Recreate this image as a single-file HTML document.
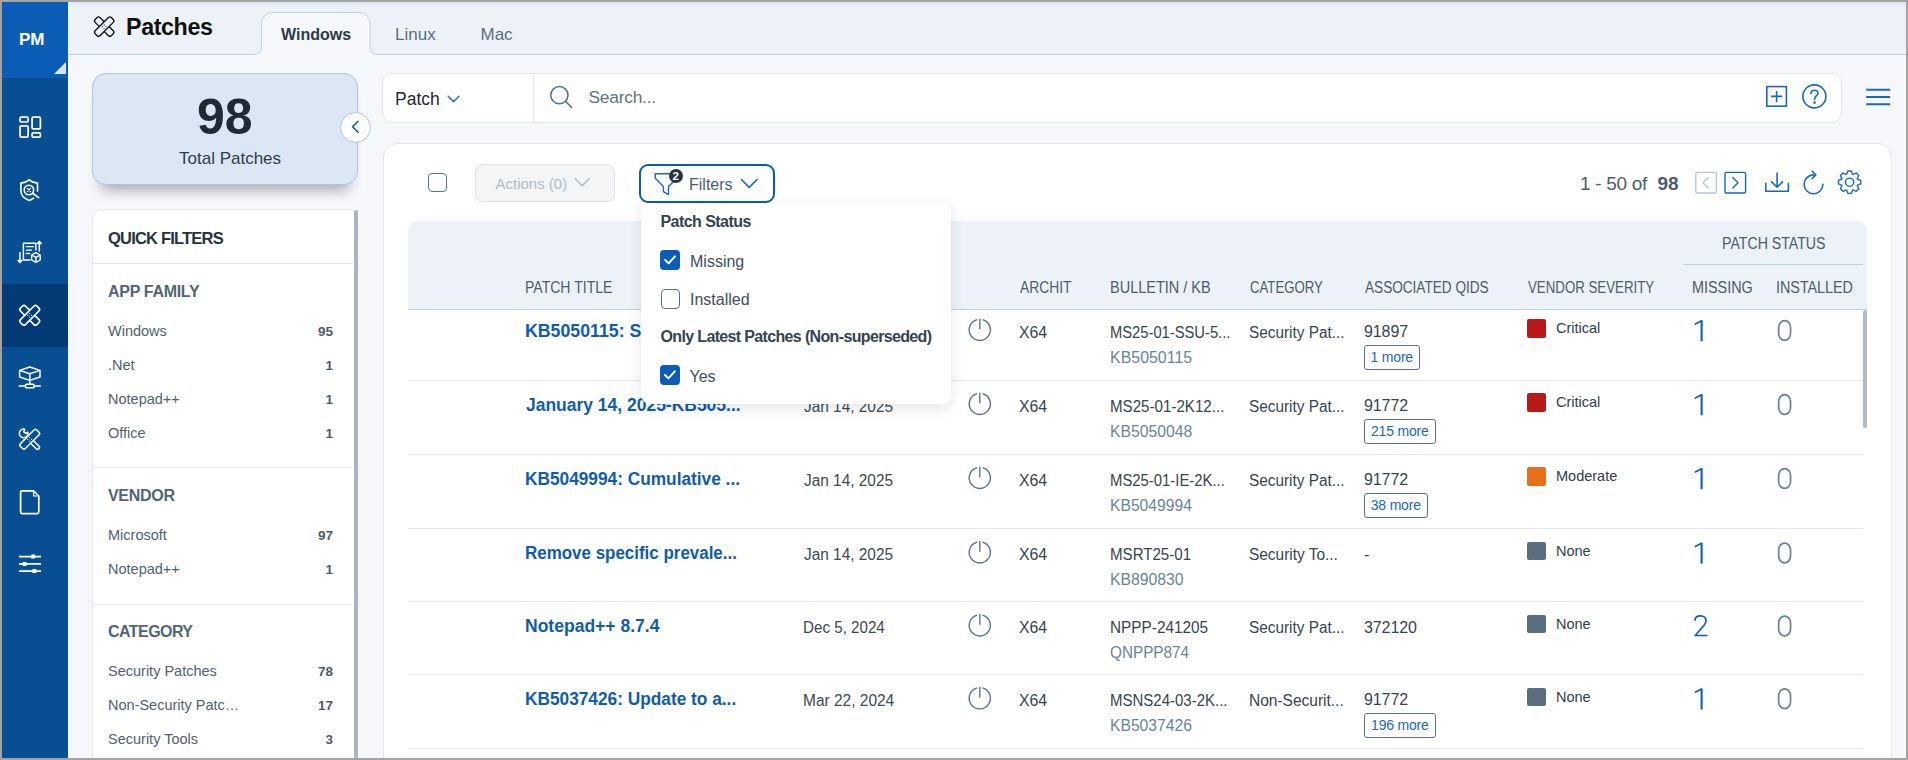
<!DOCTYPE html>
<html><head><meta charset="utf-8">
<style>
*{box-sizing:border-box;margin:0;padding:0}
html,body{width:1908px;height:760px;overflow:hidden}
body{font-family:"Liberation Sans",sans-serif;background:#a3a3a3;position:relative;color:#2b3a47}
.a{position:absolute}
.t{position:absolute;white-space:nowrap;line-height:1}
#app{position:absolute;left:2px;top:2px;width:1904px;height:756px;background:#f5f7fa;overflow:hidden}
#side{position:absolute;left:2px;top:2px;width:66px;height:756px;background:#074e93}
#pm{position:absolute;left:2px;top:2px;width:66px;height:76px;background:#0b5cb5}
#hdr{position:absolute;left:68px;top:2px;width:1838px;height:53px;background:linear-gradient(#dce8f5 0,#e1eaf5 2px,#edf2f9 6px);border-bottom:1px solid #bcd2ea}
svg{position:absolute;overflow:visible}
</style></head>
<body>
<div id="app"></div>
<!-- SIDEBAR -->
<div id="side"></div>
<div id="pm"></div>
<div class="t" style="left:19px;top:31px;font-size:17px;font-weight:bold;color:#fff">PM</div>
<div class="a" style="left:54px;top:62px;width:0;height:0;border-left:12px solid transparent;border-bottom:12px solid #d9e4f3"></div>
<div class="a" style="left:2px;top:284px;width:66px;height:63px;background:#053b75"></div>


<!-- dashboard -->
<svg style="left:0;top:0" width="1908" height="760" fill="none" stroke="#fff" stroke-width="1.7">
 <rect x="20.1" y="117.1" width="8" height="4.9" rx="1.2"/>
 <rect x="20.1" y="125.9" width="8" height="11.3" rx="1.2"/>
 <rect x="32.1" y="117.1" width="8.3" height="11.8" rx="1.2"/>
 <rect x="32.1" y="132.8" width="8.3" height="4.4" rx="1.2"/>
</svg>
<!-- shield -->
<svg style="left:0;top:0" width="1908" height="760" fill="none" stroke="#fff" stroke-width="1.6" stroke-linecap="round" stroke-linejoin="round">
 <path d="M29.2 179.8 C27 181.7 24 182.9 20.9 183.1 V190.6 C20.9 195.2 24.3 198.8 29.2 200.4 C30.9 199.9 32.3 199.1 33.5 198.1"/>
 <path d="M29.2 179.8 C31.4 181.7 34.4 182.9 37.5 183.1 V191.2"/>
 <circle cx="28.9" cy="190" r="4.7"/>
 <path d="M27.3 188.4 L30.5 191.6 M30.5 188.4 L27.3 191.6" stroke-width="1.2"/>
 <path d="M32.6 193.3 L38.6 197.6" stroke-width="1.7"/>
</svg>
<!-- report -->
<svg style="left:0;top:0" width="1908" height="760" fill="none" stroke="#fff" stroke-width="1.5" stroke-linejoin="round">
 <path d="M30.4 260 H23.4 V243.3 H35.8 V250.6"/>
 <path d="M25.8 246.6 H33.8 M25.8 250.1 H32.1 M25.8 253.5 H30.2" stroke-width="1.4"/>
 <path d="M19.9 252 V260.6"/>
 <path d="M18 260.4 L19.9 262.6 L21.8 260.4 Z" fill="#fff"/>
 <path d="M39.3 243.4 V251.6"/>
 <path d="M37.4 243.6 L39.3 241.4 L41.2 243.6 Z" fill="#fff"/>
 <path d="M35.9 252.6 L40.2 255 V260 L35.9 262.4 L31.6 260 V255 Z M31.6 255 L35.9 257.4 L40.2 255 M35.9 257.4 V262.4" stroke-width="1.4"/>
</svg>
<!-- patch (active) -->
<svg style="left:0;top:0" width="1908" height="760" stroke="#fff" stroke-width="1.6">
 <g transform="translate(29.7 315.3)">
  <rect x="-11.6" y="-3.5" width="23.2" height="7" rx="2" transform="rotate(45)" fill="none"/>
  <rect x="-11.6" y="-3.5" width="23.2" height="7" rx="2" transform="rotate(-45)" fill="#053b75"/>
 </g>
</svg>
<svg style="left:0;top:0" width="1908" height="760" fill="#fff"><circle cx="27.8" cy="315.4" r=".6"/><circle cx="31.6" cy="315.4" r=".6"/><circle cx="29.7" cy="313.6" r=".6"/><circle cx="29.7" cy="317.2" r=".6"/></svg>
<!-- network box -->
<svg style="left:0;top:0" width="1908" height="760" fill="none" stroke="#fff" stroke-width="1.5" stroke-linejoin="round">
 <path d="M29.8 367 L40 370.4 V377 L29.8 380.4 L19.6 377 V370.4 Z M19.6 370.4 L29.8 373.8 L40 370.4 M29.8 373.8 V384.3"/>
 <path d="M18.6 386 H25.6 M34 386 H40.8"/>
 <rect x="25.6" y="384.3" width="8.4" height="3.4" rx=".8"/>
</svg>
<!-- tools -->
<svg style="left:0;top:0" width="1908" height="760" stroke="#fff" stroke-width="1.5" stroke-linejoin="round">
 <g transform="translate(23.6 433.4) rotate(45)">
  <rect x="3" y="-1.9" width="18.6" height="3.8" rx="1.9" fill="#074e93"/>
  <path d="M2.1 -3.8 A4.3 4.3 0 1 1 -2.1 -3.8 L-1 -1.2 H1 Z" fill="#074e93"/>
 </g>
 <g transform="translate(29.7 439.3)">
  <rect x="-11.6" y="-3.5" width="23.2" height="7" rx="2" transform="rotate(-45)" fill="#074e93"/>
 </g>
</svg>
<svg style="left:0;top:0" width="1908" height="760" fill="#fff"><circle cx="27.8" cy="439.4" r=".6"/><circle cx="31.6" cy="439.4" r=".6"/><circle cx="29.7" cy="437.6" r=".6"/><circle cx="29.7" cy="441.2" r=".6"/></svg>
<!-- document -->
<svg style="left:0;top:0" width="1908" height="760" fill="none" stroke="#fff" stroke-width="1.7" stroke-linejoin="round">
 <path d="M22.2 490.8 H33.6 L38.8 496 V512 C38.8 513 38 513.6 37.2 513.6 H22.2 C21.4 513.6 20.6 513 20.6 512 V492.4 C20.6 491.5 21.4 490.8 22.2 490.8 Z"/>
 <path d="M33.6 490.8 V496 H38.8" stroke-width="1.2"/>
</svg>
<!-- sliders -->
<svg style="left:0;top:0" width="1908" height="760" fill="none" stroke="#fff" stroke-width="1.6">
 <path d="M19 556.6 H41 M19 563.9 H41 M19 571.1 H41"/>
 <rect x="31.2" y="554.6" width="4" height="4" fill="#fff" stroke="none" rx=".5"/>
 <rect x="22.6" y="561.9" width="4" height="4" fill="#fff" stroke="none" rx=".5"/>
 <rect x="32.4" y="569.1" width="4" height="4" fill="#fff" stroke="none" rx=".5"/>
</svg>

<!-- HEADER -->
<div id="hdr"></div>
<!-- patches title icon -->
<svg style="left:0;top:0" width="1908" height="760" stroke="#111" stroke-width="1.35">
 <g transform="translate(104.2 26.6)">
  <rect x="-11.4" y="-3.4" width="22.8" height="6.8" rx="2" transform="rotate(45)" fill="none"/>
  <rect x="-11.4" y="-3.4" width="22.8" height="6.8" rx="2" transform="rotate(-45)" fill="#edf2f9"/>
 </g>
</svg>
<svg style="left:0;top:0" width="1908" height="760" fill="#333"><circle cx="102.4" cy="26.7" r=".6"/><circle cx="106" cy="26.7" r=".6"/><circle cx="104.2" cy="24.9" r=".6"/><circle cx="104.2" cy="28.5" r=".6"/></svg>
<div class="t" style="left:126px;top:16px;font-size:23.3px;letter-spacing:-0.4px;font-weight:bold;color:#111">Patches</div>
<!-- tabs -->
<svg style="left:0;top:0" width="1908" height="760"><path d="M253.5 54.5 Q261.5 54.5 261.5 46.5 V23.5 A11 11 0 0 1 272.5 12.5 H359 A11 11 0 0 1 370 23.5 V46.5 Q370 54.5 378 54.5 V56 H253.5 Z" fill="#f5f7fa"/><path d="M253.5 54.5 Q261.5 54.5 261.5 46.5 V23.5 A11 11 0 0 1 272.5 12.5 H359 A11 11 0 0 1 370 23.5 V46.5 Q370 54.5 378 54.5" fill="none" stroke="#bcd2ea" stroke-width="1"/></svg>
<div class="t" style="left:281px;top:27px;font-size:16px;font-weight:bold;color:#2b3a47">Windows</div>
<div class="t" style="left:395px;top:26px;font-size:17px;color:#5b6e7d">Linux</div>
<div class="t" style="left:480.5px;top:26px;font-size:17px;color:#5b6e7d">Mac</div>

<!-- LEFT PANEL -->
<div class="a" style="left:92px;top:73px;width:266px;height:112px;background:#dce7f5;border:1px solid #a9c5e8;border-radius:14px;box-shadow:0 14px 14px -9px rgba(0,0,0,.32)"></div>
<div class="t" style="left:197px;top:92px;font-size:50px;font-weight:bold;color:#1f2a35">98</div>
<div class="t" style="left:179px;top:150px;font-size:17px;color:#2f3d49">Total Patches</div>
<div class="a" style="left:340px;top:111.5px;width:31px;height:31px;border-radius:50%;background:#fff;border:1px solid #a9c5e8"></div>
<svg style="left:0;top:0" width="1908" height="760" fill="none" stroke="#0b5cb5" stroke-width="1.6" stroke-linecap="round" stroke-linejoin="round"><path d="M358 121.3 L352.6 126.8 L358 132.3"/></svg>

<div class="a" style="left:92px;top:209px;width:266px;height:560px;background:#fff;border:1px solid #e4e9ee;border-radius:10px 10px 0 0"></div>
<div class="a" style="left:353.5px;top:210px;width:4.5px;height:560px;background:#a9b6c0;border-radius:2px 2px 0 0"></div>
<div class="t" style="left:108px;top:229.5px;font-size:16.5px;letter-spacing:-0.8px;font-weight:bold;color:#26323d">QUICK FILTERS</div>
<div class="a" style="left:93px;top:263px;width:260px;height:1px;background:#e4e9ee"></div>
<div class="t" style="left:108px;top:284px;font-size:16px;letter-spacing:-0.3px;font-weight:bold;color:#536575">APP FAMILY</div>
<div class="t" style="left:108px;top:324.0px;font-size:14.5px;color:#4f6170">Windows</div>
<div class="t" style="left:232px;width:101px;text-align:right;top:324.5px;font-size:13.5px;font-weight:bold;color:#4a5c6b">95</div>
<div class="t" style="left:108px;top:358.0px;font-size:14.5px;color:#4f6170">.Net</div>
<div class="t" style="left:232px;width:101px;text-align:right;top:358.5px;font-size:13.5px;font-weight:bold;color:#4a5c6b">1</div>
<div class="t" style="left:108px;top:392.0px;font-size:14.5px;color:#4f6170">Notepad++</div>
<div class="t" style="left:232px;width:101px;text-align:right;top:392.5px;font-size:13.5px;font-weight:bold;color:#4a5c6b">1</div>
<div class="t" style="left:108px;top:426.0px;font-size:14.5px;color:#4f6170">Office</div>
<div class="t" style="left:232px;width:101px;text-align:right;top:426.5px;font-size:13.5px;font-weight:bold;color:#4a5c6b">1</div>
<div class="a" style="left:93px;top:467px;width:260px;height:1px;background:#e4e9ee"></div>
<div class="t" style="left:108px;top:488px;font-size:16px;letter-spacing:-0.3px;font-weight:bold;color:#536575">VENDOR</div>
<div class="t" style="left:108px;top:528.0px;font-size:14.5px;color:#4f6170">Microsoft</div>
<div class="t" style="left:232px;width:101px;text-align:right;top:528.5px;font-size:13.5px;font-weight:bold;color:#4a5c6b">97</div>
<div class="t" style="left:108px;top:562.0px;font-size:14.5px;color:#4f6170">Notepad++</div>
<div class="t" style="left:232px;width:101px;text-align:right;top:562.5px;font-size:13.5px;font-weight:bold;color:#4a5c6b">1</div>
<div class="a" style="left:93px;top:604px;width:260px;height:1px;background:#e4e9ee"></div>
<div class="t" style="left:108px;top:624px;font-size:16px;letter-spacing:-0.55px;font-weight:bold;color:#536575">CATEGORY</div>
<div class="t" style="left:108px;top:664.0px;font-size:14.5px;color:#4f6170">Security Patches</div>
<div class="t" style="left:232px;width:101px;text-align:right;top:664.5px;font-size:13.5px;font-weight:bold;color:#4a5c6b">78</div>
<div class="t" style="left:108px;top:698.0px;font-size:14.5px;color:#4f6170">Non-Security Patc…</div>
<div class="t" style="left:232px;width:101px;text-align:right;top:698.5px;font-size:13.5px;font-weight:bold;color:#4a5c6b">17</div>
<div class="t" style="left:108px;top:732.0px;font-size:14.5px;color:#4f6170">Security Tools</div>
<div class="t" style="left:232px;width:101px;text-align:right;top:732.5px;font-size:13.5px;font-weight:bold;color:#4a5c6b">3</div>

<!-- SEARCH BAR -->
<div class="a" style="left:382px;top:73px;width:1460px;height:50px;background:#fff;border:1px solid #dfe6eb;border-radius:10px"></div>
<div class="a" style="left:533px;top:74px;width:1px;height:48px;background:#dfe6eb"></div>
<div class="t" style="left:395px;top:90.5px;font-size:17.5px;color:#1f2a35">Patch</div>
<svg style="left:0;top:0" width="1908" height="760" fill="none" stroke="#2f78c4" stroke-width="1.5" stroke-linecap="round" stroke-linejoin="round"><path d="M448.2 96.2 L453.6 101.6 L459 96.2"/></svg>
<svg style="left:0;top:0" width="1908" height="760" fill="none" stroke="#577083" stroke-width="1.5" stroke-linecap="round"><circle cx="559.4" cy="95.2" r="8.6"/><path d="M565.6 101.4 L571.4 107.2"/></svg>
<div class="t" style="left:588.5px;top:89px;font-size:17.4px;letter-spacing:-0.25px;color:#5e7282">Search...</div>
<svg style="left:0;top:0" width="1908" height="760" fill="none" stroke="#1b67b8" stroke-width="1.6"><rect x="1766.8" y="86.6" width="19.6" height="19.6"/><path d="M1776.6 91 V102.2 M1771 96.4 H1782.2"/></svg>
<svg style="left:0;top:0" width="1908" height="760" fill="none" stroke="#1b67b8" stroke-width="1.6" stroke-linecap="round"><circle cx="1814.4" cy="96.4" r="11.5"/><path d="M1810.9 93.6 C1810.9 91.4 1812.5 90.2 1814.5 90.2 C1816.5 90.2 1818 91.5 1818 93.3 C1818 95.7 1814.6 96 1814.6 98.6 V99.6"/><circle cx="1814.6" cy="102.6" r=".5" fill="#1b67b8"/></svg>
<svg style="left:0;top:0" width="1908" height="760" fill="none" stroke="#1b67b8" stroke-width="2"><path d="M1866.2 89.8 H1890.2 M1866.2 97 H1890.2 M1866.2 104.2 H1890.2"/></svg>

<!-- MAIN CARD -->
<div class="a" style="left:383px;top:143px;width:1509px;height:640px;background:#fff;border:1px solid #e3e8ed;border-radius:14px"></div>
<div class="a" style="left:428px;top:173px;width:19px;height:19px;border:1.5px solid #5d7281;border-radius:4px;background:#fff"></div>
<div class="a" style="left:475px;top:164px;width:140px;height:38px;border:1px solid #dde3e8;border-radius:8px;background:#f3f5f7"></div>
<div class="t" style="left:495.5px;top:175.5px;font-size:15px;color:#b3bcc4">Actions (0)</div>
<svg style="left:0;top:0" width="1908" height="760" fill="none" stroke="#b3bcc4" stroke-width="1.6" stroke-linecap="round" stroke-linejoin="round"><path d="M575.2 178.8 L582.2 185.8 L589.2 178.8"/></svg>
<div class="a" style="left:639px;top:164px;width:136px;height:38.5px;border:2px solid #0b5cad;border-radius:9px;background:#fff"></div>
<svg style="left:0;top:0" width="1908" height="760" fill="none" stroke="#1b67b8" stroke-width="1.4" stroke-linejoin="round"><path d="M672.5 173.8 H655.3 V178.3 L663.4 186.6 V191.6 L668.5 194.6 V186.6 L673.5 181.4"/></svg>
<div class="a" style="left:669px;top:169px;width:14px;height:14px;border-radius:50%;background:#263540"></div>
<div class="t" style="left:672.5px;top:170.5px;font-size:11.5px;font-weight:bold;color:#fff">2</div>
<div class="t" style="left:689px;top:177px;font-size:16px;color:#4b5d6c">Filters</div>
<svg style="left:0;top:0" width="1908" height="760" fill="none" stroke="#1b67b8" stroke-width="1.5" stroke-linecap="round" stroke-linejoin="round"><path d="M741.5 179.6 L749.2 187.4 L757 179.6"/></svg>

<!-- pagination -->
<div class="t" style="left:1580px;top:173.5px;font-size:19px;letter-spacing:-0.3px;color:#4b5d6c">1 - 50 of</div>
<div class="t" style="left:1657.5px;top:173.5px;font-size:19px;font-weight:bold;color:#4b5d6c">98</div>
<svg style="left:0;top:0" width="1908" height="760" fill="none" stroke-width="1.4" stroke-linecap="round" stroke-linejoin="round">
 <rect x="1695.8" y="172.4" width="20.6" height="20.6" rx="1.5" stroke="#b8c7d2"/>
 <path d="M1708.2 177.4 L1703 182.7 L1708.2 188" stroke="#b8c7d2"/>
 <rect x="1725" y="172.4" width="20.6" height="20.6" rx="1.5" stroke="#1b67b8"/>
 <path d="M1732.8 177.4 L1738 182.7 L1732.8 188" stroke="#1b67b8"/>
 <path d="M1765.8 183.2 V191.2 H1788.4 V183.2 M1777.1 173 V187.2 M1771.7 181.9 L1777.1 187.3 L1782.5 181.9" stroke="#1b67b8" stroke-width="1.6"/>
 <path d="M1813.5 174.9 A9.4 9.4 0 1 0 1822.9 184.3" stroke="#1b67b8" stroke-width="1.6"/>
 <path d="M1812.2 171.3 L1815.8 174.9 L1812.2 178.5" stroke="#1b67b8" stroke-width="1.6"/>
 <path d="M1846.66 174.22 L1847.86 171.04 L1851.34 171.04 L1852.54 174.22 L1853.16 174.48 L1856.26 173.07 L1858.73 175.54 L1857.32 178.64 L1857.58 179.26 L1860.76 180.46 L1860.76 183.94 L1857.58 185.14 L1857.32 185.76 L1858.73 188.86 L1856.26 191.33 L1853.16 189.92 L1852.54 190.18 L1851.34 193.36 L1847.86 193.36 L1846.66 190.18 L1846.04 189.92 L1842.94 191.33 L1840.47 188.86 L1841.88 185.76 L1841.62 185.14 L1838.44 183.94 L1838.44 180.46 L1841.62 179.26 L1841.88 178.64 L1840.47 175.54 L1842.94 173.07 L1846.04 174.48 Z" stroke="#1b67b8" stroke-width="1.4"/>
 <circle cx="1849.6" cy="182.2" r="4.1" stroke="#1b67b8" stroke-width="1.4"/>
</svg>
<!-- TABLE -->
<div class="a" style="left:408px;top:221px;width:1459px;height:89px;background:#edf2f9;border-bottom:1px solid #bcd2ea;border-radius:10px 10px 0 0"></div>
<div class="a" style="left:1683px;top:264px;width:180px;height:1px;background:#bcd2ea"></div>
<div class="a" style="left:408px;top:380px;width:1455px;height:1px;background:#e3e8ec"></div>
<svg style="left:0;top:0" width="1908" height="760" fill="none" stroke="#587083" stroke-width="1.35"><path d="M977.10 319.65 A10.6 10.6 0 1 0 982.50 319.65"/><path d="M979.8 318.50 V329.30"/></svg>
<div class="t" style="left:1364px;top:324px;font-size:16px;color:#36444f;letter-spacing:-0.1px">91897</div>
<div class="a" style="left:1364px;top:344.6px;width:55.5px;height:25.3px;border:1px solid #5d7281;border-radius:3px;font-size:14px;line-height:23.3px;text-align:center;color:#1b67b8;white-space:nowrap;letter-spacing:-0.2px">1 more</div>
<div class="a" style="left:1527px;top:319.4px;width:18.8px;height:18.6px;border-radius:2px;background:#b81a1a"></div>
<div class="t" style="left:1556px;top:321.2px;font-size:14.5px;color:#2f3d49">Critical</div>
<svg style="left:0;top:0" width="1908" height="760" fill="none" stroke="#0f5cb5" stroke-linecap="butt" stroke-linejoin="round"><path d="M1701.6 320.40 V341.20" stroke-width="2.1"/><path d="M1702 320.50 L1694.8 324.20" stroke-width="1.7"/></svg>
<svg style="left:0;top:0" width="1908" height="760" fill="none" stroke="#688296" stroke-width="1.7"><rect x="1778.65" y="320.65" width="11.9" height="19.7" rx="5.95" ry="6.9"/></svg>
<div class="a" style="left:408px;top:454px;width:1455px;height:1px;background:#e3e8ec"></div>
<svg style="left:0;top:0" width="1908" height="760" fill="none" stroke="#587083" stroke-width="1.35"><path d="M977.10 393.65 A10.6 10.6 0 1 0 982.50 393.65"/><path d="M979.8 392.50 V403.30"/></svg>
<div class="t" style="left:1364px;top:398px;font-size:16px;color:#36444f;letter-spacing:-0.1px">91772</div>
<div class="a" style="left:1364px;top:418.6px;width:71.6px;height:25.3px;border:1px solid #5d7281;border-radius:3px;font-size:14px;line-height:23.3px;text-align:center;color:#1b67b8;white-space:nowrap;letter-spacing:-0.2px">215 more</div>
<div class="a" style="left:1527px;top:393.4px;width:18.8px;height:18.6px;border-radius:2px;background:#b81a1a"></div>
<div class="t" style="left:1556px;top:395.2px;font-size:14.5px;color:#2f3d49">Critical</div>
<svg style="left:0;top:0" width="1908" height="760" fill="none" stroke="#0f5cb5" stroke-linecap="butt" stroke-linejoin="round"><path d="M1701.6 394.40 V415.20" stroke-width="2.1"/><path d="M1702 394.50 L1694.8 398.20" stroke-width="1.7"/></svg>
<svg style="left:0;top:0" width="1908" height="760" fill="none" stroke="#688296" stroke-width="1.7"><rect x="1778.65" y="394.65" width="11.9" height="19.7" rx="5.95" ry="6.9"/></svg>
<div class="a" style="left:408px;top:528px;width:1455px;height:1px;background:#e3e8ec"></div>
<svg style="left:0;top:0" width="1908" height="760" fill="none" stroke="#587083" stroke-width="1.35"><path d="M977.10 467.65 A10.6 10.6 0 1 0 982.50 467.65"/><path d="M979.8 466.50 V477.30"/></svg>
<div class="t" style="left:1364px;top:472px;font-size:16px;color:#36444f;letter-spacing:-0.1px">91772</div>
<div class="a" style="left:1364px;top:492.6px;width:63.5px;height:25.3px;border:1px solid #5d7281;border-radius:3px;font-size:14px;line-height:23.3px;text-align:center;color:#1b67b8;white-space:nowrap;letter-spacing:-0.2px">38 more</div>
<div class="a" style="left:1527px;top:467.4px;width:18.8px;height:18.6px;border-radius:2px;background:#e8701a"></div>
<div class="t" style="left:1556px;top:469.2px;font-size:14.5px;color:#2f3d49">Moderate</div>
<svg style="left:0;top:0" width="1908" height="760" fill="none" stroke="#0f5cb5" stroke-linecap="butt" stroke-linejoin="round"><path d="M1701.6 468.40 V489.20" stroke-width="2.1"/><path d="M1702 468.50 L1694.8 472.20" stroke-width="1.7"/></svg>
<svg style="left:0;top:0" width="1908" height="760" fill="none" stroke="#688296" stroke-width="1.7"><rect x="1778.65" y="468.65" width="11.9" height="19.7" rx="5.95" ry="6.9"/></svg>
<div class="a" style="left:408px;top:601px;width:1455px;height:1px;background:#e3e8ec"></div>
<svg style="left:0;top:0" width="1908" height="760" fill="none" stroke="#587083" stroke-width="1.35"><path d="M977.10 542.15 A10.6 10.6 0 1 0 982.50 542.15"/><path d="M979.8 541.00 V551.80"/></svg>
<div class="t" style="left:1364px;top:546.5px;font-size:16px;color:#36444f;letter-spacing:-0.1px">-</div>
<div class="a" style="left:1527px;top:541.9px;width:18.8px;height:18.6px;border-radius:2px;background:#5b6e7d"></div>
<div class="t" style="left:1556px;top:543.7px;font-size:14.5px;color:#2f3d49">None</div>
<svg style="left:0;top:0" width="1908" height="760" fill="none" stroke="#0f5cb5" stroke-linecap="butt" stroke-linejoin="round"><path d="M1701.6 542.90 V563.70" stroke-width="2.1"/><path d="M1702 543.00 L1694.8 546.70" stroke-width="1.7"/></svg>
<svg style="left:0;top:0" width="1908" height="760" fill="none" stroke="#688296" stroke-width="1.7"><rect x="1778.65" y="543.15" width="11.9" height="19.7" rx="5.95" ry="6.9"/></svg>
<div class="a" style="left:408px;top:674px;width:1455px;height:1px;background:#e3e8ec"></div>
<svg style="left:0;top:0" width="1908" height="760" fill="none" stroke="#587083" stroke-width="1.35"><path d="M977.10 615.15 A10.6 10.6 0 1 0 982.50 615.15"/><path d="M979.8 614.00 V624.80"/></svg>
<div class="t" style="left:1364px;top:619.5px;font-size:16px;color:#36444f;letter-spacing:-0.1px">372120</div>
<div class="a" style="left:1527px;top:614.9px;width:18.8px;height:18.6px;border-radius:2px;background:#5b6e7d"></div>
<div class="t" style="left:1556px;top:616.7px;font-size:14.5px;color:#2f3d49">None</div>
<svg style="left:0;top:0" width="1908" height="760" fill="none" stroke="#0f5cb5" stroke-width="1.7" stroke-linejoin="round"><g transform="translate(1694 615.00)"><path d="M0.9 5.8 C0.9 2.7 3.3 0.9 6.5 0.9 C9.7 0.9 12 2.9 12 5.7 C12 7.7 11.1 9.1 9.9 10.5 L1.2 20.5 H13.4"/></g></svg>
<svg style="left:0;top:0" width="1908" height="760" fill="none" stroke="#688296" stroke-width="1.7"><rect x="1778.65" y="616.15" width="11.9" height="19.7" rx="5.95" ry="6.9"/></svg>
<div class="a" style="left:408px;top:748px;width:1455px;height:1px;background:#e3e8ec"></div>
<svg style="left:0;top:0" width="1908" height="760" fill="none" stroke="#587083" stroke-width="1.35"><path d="M977.10 687.95 A10.6 10.6 0 1 0 982.50 687.95"/><path d="M979.8 686.80 V697.60"/></svg>
<div class="t" style="left:1364px;top:692.3px;font-size:16px;color:#36444f;letter-spacing:-0.1px">91772</div>
<div class="a" style="left:1364px;top:712.9px;width:71.7px;height:25.3px;border:1px solid #5d7281;border-radius:3px;font-size:14px;line-height:23.3px;text-align:center;color:#1b67b8;white-space:nowrap;letter-spacing:-0.2px">196 more</div>
<div class="a" style="left:1527px;top:687.6999999999999px;width:18.8px;height:18.6px;border-radius:2px;background:#5b6e7d"></div>
<div class="t" style="left:1556px;top:689.5px;font-size:14.5px;color:#2f3d49">None</div>
<svg style="left:0;top:0" width="1908" height="760" fill="none" stroke="#0f5cb5" stroke-linecap="butt" stroke-linejoin="round"><path d="M1701.6 688.70 V709.50" stroke-width="2.1"/><path d="M1702 688.80 L1694.8 692.50" stroke-width="1.7"/></svg>
<svg style="left:0;top:0" width="1908" height="760" fill="none" stroke="#688296" stroke-width="1.7"><rect x="1778.65" y="688.95" width="11.9" height="19.7" rx="5.95" ry="6.9"/></svg>
<div class="a" style="left:1862.5px;top:310px;width:4.5px;height:118px;background:#aebbc5;border-radius:2px"></div>
<div class="t" style="left:525.12px;top:279.70px;font-size:16px;color:#4b5d6c;transform:scaleX(0.8776);transform-origin:0 0">PATCH TITLE</div>
<div class="t" style="left:1020.00px;top:279.70px;font-size:16px;color:#4b5d6c;transform:scaleX(0.8644);transform-origin:0 0">ARCHIT</div>
<div class="t" style="left:1110.09px;top:279.70px;font-size:16px;color:#4b5d6c;transform:scaleX(0.9055);transform-origin:0 0">BULLETIN / KB</div>
<div class="t" style="left:1250.18px;top:279.70px;font-size:16px;color:#4b5d6c;transform:scaleX(0.8241);transform-origin:0 0">CATEGORY</div>
<div class="t" style="left:1364.80px;top:279.70px;font-size:16px;color:#4b5d6c;transform:scaleX(0.8497);transform-origin:0 0">ASSOCIATED QIDS</div>
<div class="t" style="left:1527.80px;top:279.70px;font-size:16px;color:#4b5d6c;transform:scaleX(0.8296);transform-origin:0 0">VENDOR SEVERITY</div>
<div class="t" style="left:1692.40px;top:279.70px;font-size:16px;color:#4b5d6c;transform:scaleX(0.9000);transform-origin:0 0">MISSING</div>
<div class="t" style="left:1776.10px;top:279.70px;font-size:16px;color:#4b5d6c;transform:scaleX(0.8952);transform-origin:0 0">INSTALLED</div>
<div class="t" style="left:1721.82px;top:235.90px;font-size:16px;color:#4b5d6c;transform:scaleX(0.8843);transform-origin:0 0">PATCH STATUS</div>
<div class="t" style="left:525.01px;top:321.70px;font-size:18px;font-weight:bold;color:#0f5cad;transform:scaleX(0.9850);transform-origin:0 0">KB5050115: Security Update for Windows</div>
<div class="t" style="left:804.00px;top:324.50px;font-size:16px;color:#3a4955;transform:scaleX(0.9620);transform-origin:0 0">Jan 14, 2025</div>
<div class="t" style="left:1019.01px;top:324.90px;font-size:16px;color:#36444f;transform:scaleX(0.9889);transform-origin:0 0">X64</div>
<div class="t" style="left:1110.08px;top:324.50px;font-size:16px;color:#36444f;transform:scaleX(0.9211);transform-origin:0 0">MS25-01-SSU-5...</div>
<div class="t" style="left:1110.00px;top:349.50px;font-size:16px;color:#6b8497;transform:scaleX(0.9963);transform-origin:0 0">KB5050115</div>
<div class="t" style="left:1249.04px;top:324.50px;font-size:16px;color:#36444f;transform:scaleX(0.9588);transform-origin:0 0">Security Pat...</div>
<div class="t" style="left:526.00px;top:395.70px;font-size:18px;font-weight:bold;color:#0f5cad;transform:scaleX(0.9705);transform-origin:0 0">January 14, 2025-KB505...</div>
<div class="t" style="left:804.00px;top:398.50px;font-size:16px;color:#3a4955;transform:scaleX(0.9620);transform-origin:0 0">Jan 14, 2025</div>
<div class="t" style="left:1019.01px;top:398.90px;font-size:16px;color:#36444f;transform:scaleX(0.9889);transform-origin:0 0">X64</div>
<div class="t" style="left:1110.05px;top:398.50px;font-size:16px;color:#36444f;transform:scaleX(0.9454);transform-origin:0 0">MS25-01-2K12...</div>
<div class="t" style="left:1110.02px;top:423.50px;font-size:16px;color:#6b8497;transform:scaleX(0.9841);transform-origin:0 0">KB5050048</div>
<div class="t" style="left:1249.04px;top:398.50px;font-size:16px;color:#36444f;transform:scaleX(0.9588);transform-origin:0 0">Security Pat...</div>
<div class="t" style="left:525.04px;top:469.70px;font-size:18px;font-weight:bold;color:#0f5cad;transform:scaleX(0.9595);transform-origin:0 0">KB5049994: Cumulative ...</div>
<div class="t" style="left:804.00px;top:472.50px;font-size:16px;color:#3a4955;transform:scaleX(0.9620);transform-origin:0 0">Jan 14, 2025</div>
<div class="t" style="left:1019.01px;top:472.90px;font-size:16px;color:#36444f;transform:scaleX(0.9889);transform-origin:0 0">X64</div>
<div class="t" style="left:1110.07px;top:472.50px;font-size:16px;color:#36444f;transform:scaleX(0.9289);transform-origin:0 0">MS25-01-IE-2K...</div>
<div class="t" style="left:1110.02px;top:497.50px;font-size:16px;color:#6b8497;transform:scaleX(0.9793);transform-origin:0 0">KB5049994</div>
<div class="t" style="left:1249.04px;top:472.50px;font-size:16px;color:#36444f;transform:scaleX(0.9588);transform-origin:0 0">Security Pat...</div>
<div class="t" style="left:525.06px;top:544.20px;font-size:18px;font-weight:bold;color:#0f5cad;transform:scaleX(0.9413);transform-origin:0 0">Remove specific prevale...</div>
<div class="t" style="left:804.00px;top:547.00px;font-size:16px;color:#3a4955;transform:scaleX(0.9620);transform-origin:0 0">Jan 14, 2025</div>
<div class="t" style="left:1019.01px;top:547.40px;font-size:16px;color:#36444f;transform:scaleX(0.9889);transform-origin:0 0">X64</div>
<div class="t" style="left:1110.06px;top:547.00px;font-size:16px;color:#36444f;transform:scaleX(0.9429);transform-origin:0 0">MSRT25-01</div>
<div class="t" style="left:1110.02px;top:572.00px;font-size:16px;color:#6b8497;transform:scaleX(0.9849);transform-origin:0 0">KB890830</div>
<div class="t" style="left:1249.04px;top:547.00px;font-size:16px;color:#36444f;transform:scaleX(0.9644);transform-origin:0 0">Security To...</div>
<div class="t" style="left:525.03px;top:617.20px;font-size:18px;font-weight:bold;color:#0f5cad;transform:scaleX(0.9737);transform-origin:0 0">Notepad++ 8.7.4</div>
<div class="t" style="left:803.05px;top:620.00px;font-size:16px;color:#3a4955;transform:scaleX(0.9482);transform-origin:0 0">Dec 5, 2024</div>
<div class="t" style="left:1019.01px;top:620.40px;font-size:16px;color:#36444f;transform:scaleX(0.9889);transform-origin:0 0">X64</div>
<div class="t" style="left:1110.04px;top:620.00px;font-size:16px;color:#36444f;transform:scaleX(0.9594);transform-origin:0 0">NPPP-241205</div>
<div class="t" style="left:1110.04px;top:645.00px;font-size:16px;color:#6b8497;transform:scaleX(0.9556);transform-origin:0 0">QNPPP874</div>
<div class="t" style="left:1249.04px;top:620.00px;font-size:16px;color:#36444f;transform:scaleX(0.9588);transform-origin:0 0">Security Pat...</div>
<div class="t" style="left:525.04px;top:690.00px;font-size:18px;font-weight:bold;color:#0f5cad;transform:scaleX(0.9596);transform-origin:0 0">KB5037426: Update to a...</div>
<div class="t" style="left:803.03px;top:692.80px;font-size:16px;color:#3a4955;transform:scaleX(0.9677);transform-origin:0 0">Mar 22, 2024</div>
<div class="t" style="left:1019.01px;top:693.20px;font-size:16px;color:#36444f;transform:scaleX(0.9889);transform-origin:0 0">X64</div>
<div class="t" style="left:1110.06px;top:692.80px;font-size:16px;color:#36444f;transform:scaleX(0.9374);transform-origin:0 0">MSNS24-03-2K...</div>
<div class="t" style="left:1110.02px;top:717.80px;font-size:16px;color:#6b8497;transform:scaleX(0.9793);transform-origin:0 0">KB5037426</div>
<div class="t" style="left:1249.03px;top:692.80px;font-size:16px;color:#36444f;transform:scaleX(0.9684);transform-origin:0 0">Non-Securit...</div>
<!-- /TABLE -->

<!-- DROPDOWN -->
<div class="a" style="left:641px;top:203px;width:310px;height:201px;background:#fff;border-radius:0 0 9px 9px;box-shadow:0 4px 14px rgba(30,45,60,.13)"></div>
<div class="t" style="left:660.5px;top:213.5px;font-size:16px;font-weight:bold;color:#34434f;letter-spacing:-0.55px">Patch Status</div>
<div class="a" style="left:660px;top:250.1px;width:20px;height:19.8px;background:#0b5cb8;border-radius:4px"></div>
<svg style="left:0;top:0" width="1908" height="760" fill="none" stroke="#fff" stroke-width="2" stroke-linecap="round" stroke-linejoin="round"><path d="M665.2 260 L668.6 263.4 L675 256.4"/></svg>
<div class="t" style="left:690px;top:254px;font-size:16px;color:#3f4e5a">Missing</div>
<div class="a" style="left:660.5px;top:289px;width:19.5px;height:19.6px;background:#fff;border:1.3px solid #5d7281;border-radius:4px"></div>
<div class="t" style="left:690px;top:291.5px;font-size:16px;color:#3f4e5a">Installed</div>
<div class="t" style="left:660.5px;top:328.8px;font-size:16px;font-weight:bold;color:#34434f;letter-spacing:-0.65px">Only Latest Patches (Non-superseded)</div>
<div class="a" style="left:660px;top:365px;width:20px;height:20px;background:#0b5cb8;border-radius:4px"></div>
<svg style="left:0;top:0" width="1908" height="760" fill="none" stroke="#fff" stroke-width="2" stroke-linecap="round" stroke-linejoin="round"><path d="M665 375 L668.4 378.4 L674.8 371.3"/></svg>
<div class="t" style="left:689.5px;top:368.5px;font-size:16px;color:#3f4e5a">Yes</div>

<!-- FRAME -->
<div class="a" style="left:0;top:0;width:1908px;height:2px;background:#a3a3a3"></div>
<div class="a" style="left:0;top:758px;width:1908px;height:2px;background:#a3a3a3"></div>
<div class="a" style="left:0;top:0;width:2px;height:760px;background:#a3a3a3"></div>
<div class="a" style="left:1906px;top:0;width:2px;height:760px;background:#a3a3a3"></div>
</body></html>
